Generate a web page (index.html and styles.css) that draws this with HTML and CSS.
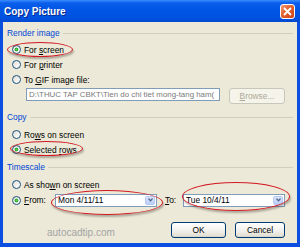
FILE: index.html
```html
<!DOCTYPE html>
<html lang="en">
<head>
	<meta charset="UTF-8">
	<title>Copy Picture</title>
	<link rel="stylesheet" href="styles.css">
</head>
<body>
	<div class="window">
		<div class="titlebar">
			<span class="title">Copy Picture</span>
			<span class="close">
				<svg width="9" height="9" viewBox="0 0 9 9"><path d="M1 1 L8 8 M8 1 L1 8" stroke="#fff" stroke-width="1.8" fill="none"/></svg>
			</span>
		</div>
		<div class="client">
			<div class="group-head"><span>Render image</span><span class="rule"></span></div>
			<div class="radio-row"><span class="radio on"></span><span>For <u>s</u>creen</span></div>
			<div class="radio-row"><span class="radio"></span><span>For <u>p</u>rinter</span></div>
			<div class="radio-row"><span class="radio"></span><span>To <u>G</u>IF image file:</span></div>
			<div class="file-row">
				<div class="textbox">D:\THUC TAP CBKT\Tien do chi tiet mong-tang ham(</div>
				<div class="btn disabled"><span><u>B</u>rowse...</span></div>
			</div>

			<div class="group-head copy-head"><span>Copy</span><span class="rule"></span></div>
			<div class="radio-row first"><span class="radio"></span><span>Ro<u>w</u>s on screen</span></div>
			<div class="radio-row"><span class="radio on"></span><span>Selected <u>r</u>ows</span></div>

			<div class="group-head time-head"><span>Timescale</span><span class="rule"></span></div>
			<div class="radio-row first"><span class="radio"></span><span>As sho<u>w</u>n on screen</span></div>
			<div class="range-row">
				<span class="radio on"></span>
				<span class="range-label"><u>F</u>rom:</span>
				<div class="combo"><span class="combo-text">Mon 4/11/11</span><span class="drop"><svg width="5" height="4" viewBox="0 0 5 4"><path d="M0.5 0.5 L2.5 2.8 L4.5 0.5" stroke="#4D6185" stroke-width="1.2" fill="none"/></svg></span></div>
				<span class="range-label to"><u>T</u>o:</span>
				<div class="combo"><span class="combo-text">Tue 10/4/11</span><span class="drop"><svg width="5" height="4" viewBox="0 0 5 4"><path d="M0.5 0.5 L2.5 2.8 L4.5 0.5" stroke="#4D6185" stroke-width="1.2" fill="none"/></svg></span></div>
			</div>

			<div class="buttons">
				<div class="btn ok"><span>OK</span></div>
				<div class="btn cancel"><span>Cancel</span></div>
			</div>
		</div>

		<!-- annotations drawn over the dialog -->
		<span class="mark mark-screen"></span>
		<span class="mark mark-rows"></span>
		<span class="mark mark-from"></span>
		<span class="mark mark-to"></span>
		<span class="watermark">autocadtip.com</span>
	</div>
</body>
</html>
```

FILE: styles.css
```css
html, body {
	padding: 0;
	margin: 0;
}

.window {
	position: relative;
	width: 300px;
	height: 247px;
	overflow: hidden;
	font-family: "Liberation Sans", Arial, sans-serif;
	font-size: 8.4px;
	color: #000;
}

/*/ Title bar /*/

.titlebar {
	box-sizing: border-box;
	height: 22px;
	display: flex;
	align-items: center;
	justify-content: space-between;
	padding: 0 5px 0 4px;
	background: linear-gradient(#3C8DFF 0, #0A5EEA 3px, #0055E5 45%, #0052E0 80%, #0049CF 100%);
}

.title {
	color: #fff;
	font-weight: bold;
	font-size: 10px;
	text-shadow: 1px 1px 0 #0A2A8A;
}

.close {
	box-sizing: border-box;
	width: 15px;
	height: 15px;
	display: flex;
	align-items: center;
	justify-content: center;
	border: 1px solid #fff;
	border-radius: 3px;
	background: linear-gradient(135deg, #F09A78 0, #E2612F 45%, #C9431A 100%);
}

/*/ Client area /*/

.client {
	box-sizing: border-box;
	height: 225px;
	border: 3px solid #0A4FE0;
	border-top: 0;
	border-bottom-width: 4px;
	background: #ECE9D8;
	padding: 5px 12px 0 4px;
}

.group-head {
	display: flex;
	align-items: center;
	height: 12px;
	color: #0046D5;
}

.group-head .rule {
	flex: 1;
	height: 1px;
	margin: 0 -8px 0 3px;
	background: #D0CEBF;
}

.copy-head {
	margin-top: 7px;
}

.time-head {
	margin-top: 4px;
}

.radio-row {
	display: flex;
	align-items: center;
	gap: 3px;
	height: 15px;
	padding-left: 5px;
}

.group-head + .radio-row {
	margin-top: 3px;
}

.radio-row.first {
	margin-top: 4px;
}

.radio {
	box-sizing: border-box;
	width: 9px;
	height: 9px;
	flex: none;
	border: 1px solid #1C5180;
	border-radius: 50%;
	background: linear-gradient(135deg, #DCDBD3 0, #F4F4F0 60%, #fff 100%);
}

.radio.on {
	background: radial-gradient(circle, #5FE05F 0, #21A121 1.6px, transparent 2.2px), linear-gradient(135deg, #DCDBD3 0, #F4F4F0 60%, #fff 100%);
}

.file-row {
	display: flex;
	align-items: flex-start;
	gap: 9px;
	height: 16px;
	margin-top: 1px;
	padding-left: 19px;
}

.textbox {
	box-sizing: border-box;
	width: 194px;
	height: 13px;
	line-height: 11px;
	padding-left: 2px;
	border: 1px solid #7F9DB9;
	background: #fff;
	color: #7A7A7A;
	font-size: 7.9px;
	white-space: nowrap;
	overflow: hidden;
}

.btn {
	box-sizing: border-box;
	height: 16px;
	display: flex;
	align-items: center;
	justify-content: center;
	border: 1px solid #003C74;
	border-radius: 3px;
	background: linear-gradient(#FFFFFF 0, #F3F2EE 50%, #E3E0D6 90%, #D5D0C4 100%);
}

.btn.disabled {
	width: 56px;
	border-color: #C9C7BA;
	background: #F5F4EA;
	color: #ACA899;
}

.btn.ok {
	width: 55px;
}

.btn.cancel {
	width: 50px;
}

/*/ From / To row /*/

.range-row {
	display: flex;
	align-items: center;
	height: 16px;
	padding-left: 5px;
}

.range-label {
	width: 31px;
	margin-left: 3px;
}

.range-label.to {
	width: 18px;
	margin-left: 8px;
}

.combo {
	box-sizing: border-box;
	width: 102px;
	height: 13px;
	display: flex;
	align-items: center;
	justify-content: space-between;
	padding: 0 1px 0 2px;
	border: 1px solid #7F9DB9;
	background: #fff;
}

.drop {
	box-sizing: border-box;
	width: 10px;
	height: 9px;
	display: flex;
	align-items: center;
	justify-content: center;
	border: 1px solid #B4C8F4;
	border-radius: 2px;
	background: linear-gradient(#DCE6FD, #B9CDF9);
}

.buttons {
	display: flex;
	justify-content: flex-end;
	gap: 9px;
	margin-top: 14px;
}

/*/ Annotations /*/

.mark {
	position: absolute;
	box-sizing: border-box;
	border: 1.5px solid #D21A22;
	border-radius: 50%;
	box-shadow: 1px 2px 2px rgba(60, 50, 40, .35);
}

.mark-screen {
	left: 7px;
	top: 42px;
	width: 66px;
	height: 15px;
}

.mark-rows {
	left: 10px;
	top: 141px;
	width: 73px;
	height: 15px;
}

.mark-from {
	left: 51px;
	top: 190px;
	width: 112px;
	height: 25px;
}

.mark-to {
	left: 182px;
	top: 182px;
	width: 108px;
	height: 29px;
}

.watermark {
	position: absolute;
	left: 47px;
	top: 227px;
	font-size: 10px;
	color: #A4A4A4;
}
```
